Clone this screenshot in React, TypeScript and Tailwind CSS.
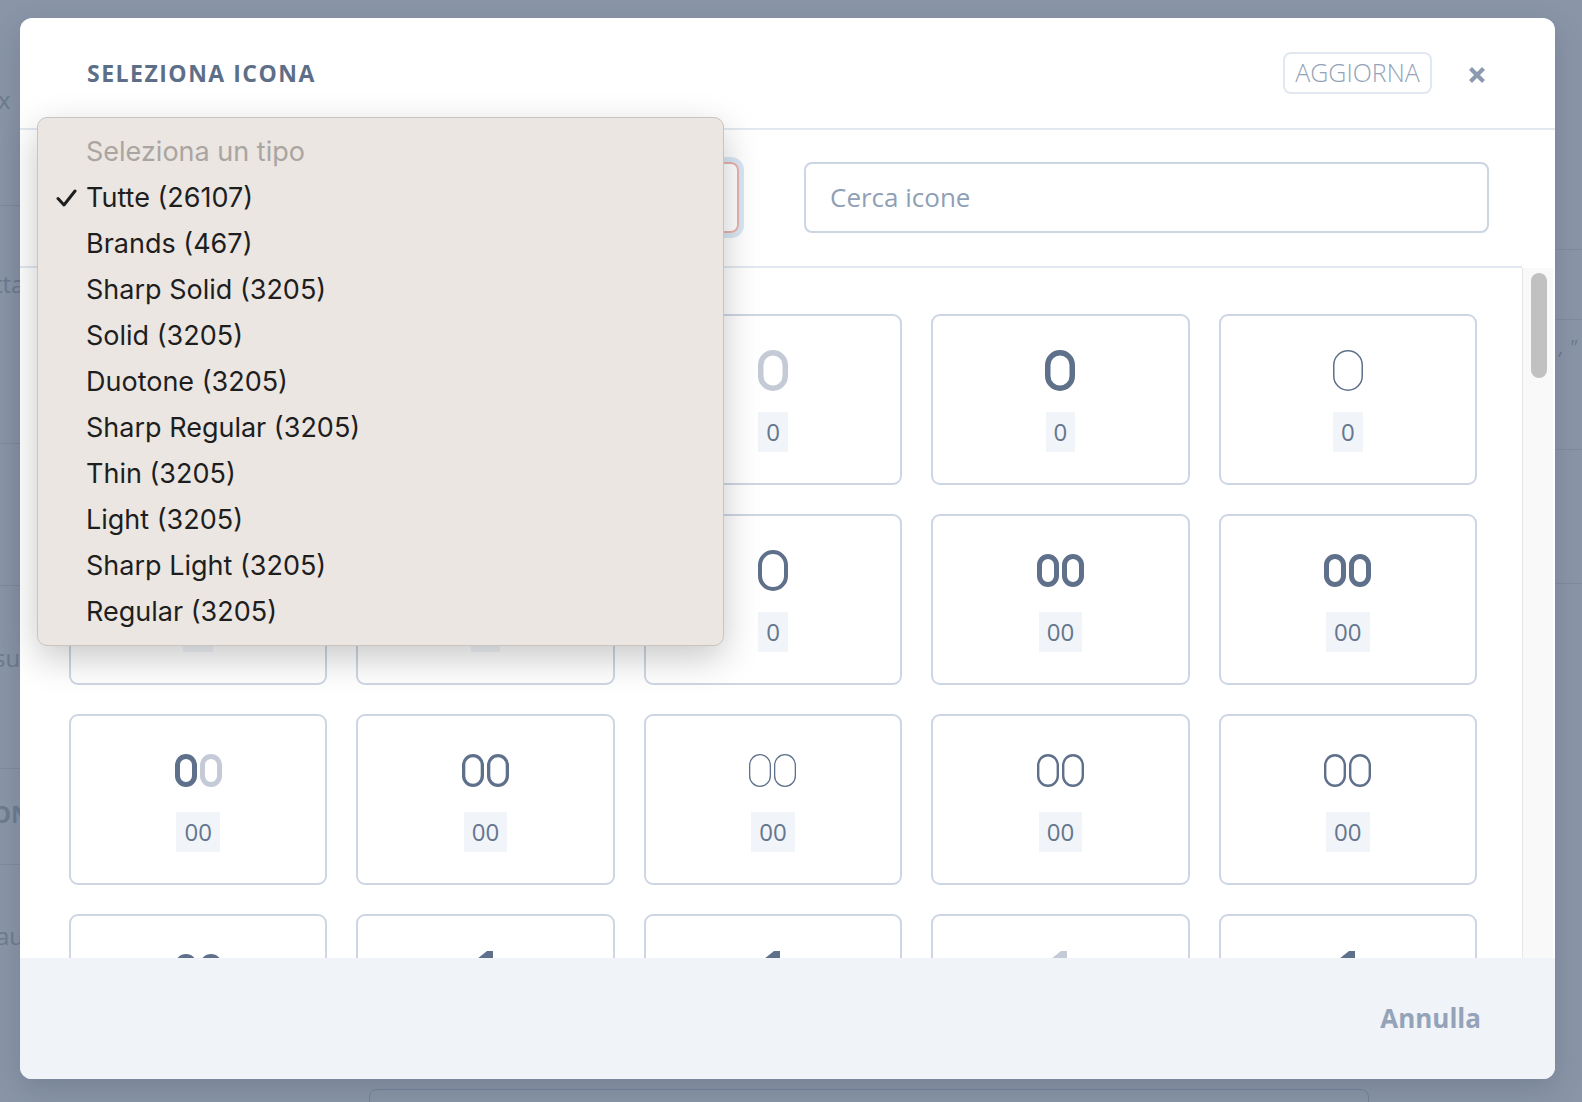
import React from "react";

const DARK = "#5f708b";
const LIGHT = "#c4cbd6";

type G =
  | { kind: "0"; sw: number; color: string }
  | { kind: "00"; sw: number; color: string; color2?: string }
  | { kind: "1"; color: string };

function Zero({ w, h, sw, color }: { w: number; h: number; sw: number; color: string }) {
  return (
    <svg width={w} height={h} viewBox={`0 0 ${w} ${h}`}>
      <rect
        x={sw / 2}
        y={sw / 2}
        width={w - sw}
        height={h - sw}
        rx={(w - sw) / 2}
        fill="none"
        stroke={color}
        strokeWidth={sw}
      />
    </svg>
  );
}

function One({ color }: { color: string }) {
  return (
    <svg width={24} height={41} viewBox="0 0 24 41">
      <path d="M3 9 L13 1 H19 V35 H23 V41 H3 V35 H12 V11 L6 15 Z" fill={color} />
    </svg>
  );
}

function Glyph({ g }: { g: G }) {
  if (g.kind === "0") return <Zero w={30} h={41} sw={g.sw} color={g.color} />;
  if (g.kind === "00")
    return (
      <div className="flex gap-[3px]">
        <Zero w={22} h={33} sw={g.sw} color={g.color} />
        <Zero w={22} h={33} sw={g.sw} color={g.color2 ?? g.color} />
      </div>
    );
  return <One color={g.color} />;
}

const cards: { g: G; label: string }[] = [
  { g: { kind: "0", sw: 5.5, color: DARK }, label: "0" },
  { g: { kind: "0", sw: 5.5, color: DARK }, label: "0" },
  { g: { kind: "0", sw: 5.5, color: LIGHT }, label: "0" },
  { g: { kind: "0", sw: 5.5, color: DARK }, label: "0" },
  { g: { kind: "0", sw: 1.5, color: DARK }, label: "0" },

  { g: { kind: "0", sw: 4, color: DARK }, label: "0" },
  { g: { kind: "0", sw: 4, color: DARK }, label: "0" },
  { g: { kind: "0", sw: 4, color: DARK }, label: "0" },
  { g: { kind: "00", sw: 5, color: DARK }, label: "00" },
  { g: { kind: "00", sw: 5, color: DARK }, label: "00" },

  { g: { kind: "00", sw: 5, color: DARK, color2: LIGHT }, label: "00" },
  { g: { kind: "00", sw: 3.3, color: DARK }, label: "00" },
  { g: { kind: "00", sw: 1.3, color: DARK }, label: "00" },
  { g: { kind: "00", sw: 2.4, color: DARK }, label: "00" },
  { g: { kind: "00", sw: 2.4, color: DARK }, label: "00" },

  { g: { kind: "00", sw: 5, color: DARK }, label: "00" },
  { g: { kind: "1", color: DARK }, label: "1" },
  { g: { kind: "1", color: DARK }, label: "1" },
  { g: { kind: "1", color: LIGHT }, label: "1" },
  { g: { kind: "1", color: DARK }, label: "1" },
];

const options = [
  "Tutte (26107)",
  "Brands (467)",
  "Sharp Solid (3205)",
  "Solid (3205)",
  "Duotone (3205)",
  "Sharp Regular (3205)",
  "Thin (3205)",
  "Light (3205)",
  "Sharp Light (3205)",
  "Regular (3205)",
];

const ui = { fontFamily: '"Open Sans", "Noto Sans", sans-serif' };
const sys = { fontFamily: 'Inter, "Liberation Sans", sans-serif' };

export default function App() {
  return (
    <div className="relative h-[1102px] w-full overflow-hidden bg-[#8a96a8]" style={ui}>
      {/* dimmed page behind the overlay */}
      <div className="absolute left-0 top-0 h-full w-[20px] overflow-hidden text-[24px] text-[#6e7b90]">
        <div className="absolute left-[-2px] top-[82px]">x</div>
        <div className="absolute left-[-6px] top-[266px]">tta</div>
        <div className="absolute left-[-6px] top-[640px]">su</div>
        <div className="absolute left-[-8px] top-[796px] font-bold">ON</div>
        <div className="absolute left-[-4px] top-[918px]">au</div>
        <div className="absolute left-0 top-[205px] h-px w-full bg-[#7f8b9d]" />
        <div className="absolute left-0 top-[443px] h-px w-full bg-[#7f8b9d]" />
        <div className="absolute left-0 top-[585px] h-px w-full bg-[#7f8b9d]" />
        <div className="absolute left-0 top-[768px] h-px w-full bg-[#7f8b9d]" />
        <div className="absolute left-0 top-[864px] h-px w-full bg-[#7f8b9d]" />
      </div>
      <div className="absolute right-0 top-0 h-full w-[27px] overflow-hidden text-[20px] text-[#6e7b90]">
        <div className="absolute left-0 top-[249px] h-px w-full bg-[#7f8b9d]" />
        <div className="absolute left-0 top-[319px] h-px w-full bg-[#7f8b9d]" />
        <div className="absolute left-[4px] top-[332px] italic">, "</div>
        <div className="absolute left-0 top-[449px] h-px w-full bg-[#7f8b9d]" />
        <div className="absolute left-0 top-[583px] h-px w-full bg-[#7f8b9d]" />
      </div>
      <div className="absolute left-[369px] top-[1089px] h-[40px] w-[1000px] rounded-[8px] border border-[#77839a]" />

      {/* modal */}
      <div className="absolute left-[20px] top-[18px] flex h-[1061px] w-[1535px] flex-col overflow-hidden rounded-[12px] bg-white shadow-[0_10px_30px_rgba(30,40,60,0.18)]">
        {/* header */}
        <div className="flex h-[112px] shrink-0 items-center justify-between border-b-2 border-[#e2e8f0] pl-[67px] pr-[69px]">
          <div className="text-[23px] font-bold uppercase tracking-[1.5px] text-[#5d6e88]">Seleziona icona</div>
          <div className="flex items-center gap-[36px]">
            <div className="flex h-[42px] w-[149px] items-center justify-center rounded-[8px] border-2 border-[#e2e8f0] text-[25px] font-light text-[#94a3b8]">
              AGGIORNA
            </div>
            <svg width="18" height="18" viewBox="0 0 18 18" className="mt-[3px]">
              <path d="M2.5 2.5 L15.5 15.5 M15.5 2.5 L2.5 15.5" stroke="#8c9ab0" strokeWidth="4.2" strokeLinecap="butt" />
            </svg>
          </div>
        </div>

        {/* filters */}
        <div className="flex h-[136px] shrink-0 gap-[65px] pb-[33px] pl-[49px] pr-[66px] pt-[32px]">
          <div className="h-[71px] w-[670px] shrink-0 rounded-[8px] border-2 border-[#e6b3ad] ring-[5px] ring-[#d9e8f5]" />
          <div className="flex h-[71px] flex-1 items-center rounded-[8px] border-2 border-[#ccd5e2] pl-[24px] text-[26px] text-[#8f9fb6]">
            Cerca icone
          </div>
        </div>

        {/* scroll area */}
        <div className="flex min-h-0 flex-1">
          <div className="w-[1502px] overflow-hidden border-t-2 border-[#e2e8f0] pl-[49px] pr-[45px] pt-[46px]">
            <div className="grid grid-cols-5 gap-[29px]">
              {cards.map((c, i) => (
                <div
                  key={i}
                  className="flex h-[171px] flex-col items-center rounded-[9px] border-2 border-[#cdd6e2] bg-white pt-[34px]"
                >
                  <div className="flex h-[41px] items-center justify-center">
                    <Glyph g={c.g} />
                  </div>
                  <div className="mt-[21px] h-[40px] bg-[#f1f5f9] px-[8px] text-[24px] font-normal leading-[40px] text-[#66768e]">
                    {c.label}
                  </div>
                </div>
              ))}
            </div>
          </div>
          <div className="w-[33px] pr-[2px] pt-[2px]">
            <div className="h-full border-l border-[#e6e6e6] bg-[#f9f9f9] pl-[8px] pt-[5px]">
              <div className="h-[105px] w-[16px] rounded-full bg-[#c1c1c1]" />
            </div>
          </div>
        </div>

        {/* footer */}
        <div className="flex h-[121px] shrink-0 items-center justify-end bg-[#f0f4f8] pr-[74px]">
          <span className="text-[26px] font-bold text-[#94a3b8]">Annulla</span>
        </div>
      </div>

      {/* native select popup */}
      <div
        className="absolute left-[37px] top-[117px] w-[687px] rounded-[10px] border border-[#c9c4bf] bg-[#ebe6e2] pb-[10px] pt-[11px] shadow-[0_12px_36px_rgba(0,0,0,0.22)]"
        style={sys}
      >
        <div className="flex h-[46px] items-center pl-[48px] text-[27px] text-[#aaa5a1]">Seleziona un tipo</div>
        {options.map((o, i) => (
          <div key={o} className="flex h-[46px] items-center text-[27px] text-[#1e1e1e]">
            <div className="flex w-[48px] justify-start pl-[18px]">
              {i === 0 && (
                <svg width="21" height="18" viewBox="0 0 21 18">
                  <path d="M2 9.5 L8 16 L19 2" fill="none" stroke="#1e1e1e" strokeWidth="3" strokeLinejoin="round" strokeLinecap="round" />
                </svg>
              )}
            </div>
            <span>{o}</span>
          </div>
        ))}
      </div>
    </div>
  );
}
